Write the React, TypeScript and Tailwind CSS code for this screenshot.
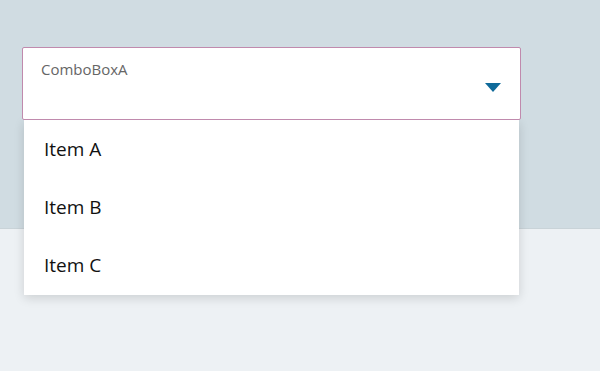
export default function App() {
  const items = ['Item A', 'Item B', 'Item C'];
  return (
    <div className="relative h-[371px] w-[600px] overflow-hidden bg-[#edf1f4] font-['Open_Sans',sans-serif]">
      <div className="h-[229px] border-b border-[#c9d3d8] bg-[#d0dce2]" />
      <div className="absolute left-[22px] top-[47px] w-[499px]">
        <div className="relative h-[73px] rounded-[2px] border-[1.5px] border-[#c08aad] bg-white">
          <div className="pl-[18px] pt-[11px] text-[15px] leading-[20px] text-[#666]">ComboBoxA</div>
          <svg className="absolute right-[19px] top-[35px]" width="16" height="9" viewBox="0 0 16 9">
            <path d="M0 0 H16 L8 9 Z" fill="#0f6a9a" />
          </svg>
        </div>
        <ul className="mx-[2px] bg-white pb-[1px] shadow-[0_3px_10px_rgba(0,0,0,0.14)]">
          {items.map((item) => (
            <li key={item} className="flex h-[58px] items-center pl-[20px] text-[19px] text-[#111]">
              {item}
            </li>
          ))}
        </ul>
      </div>
    </div>
  );
}
